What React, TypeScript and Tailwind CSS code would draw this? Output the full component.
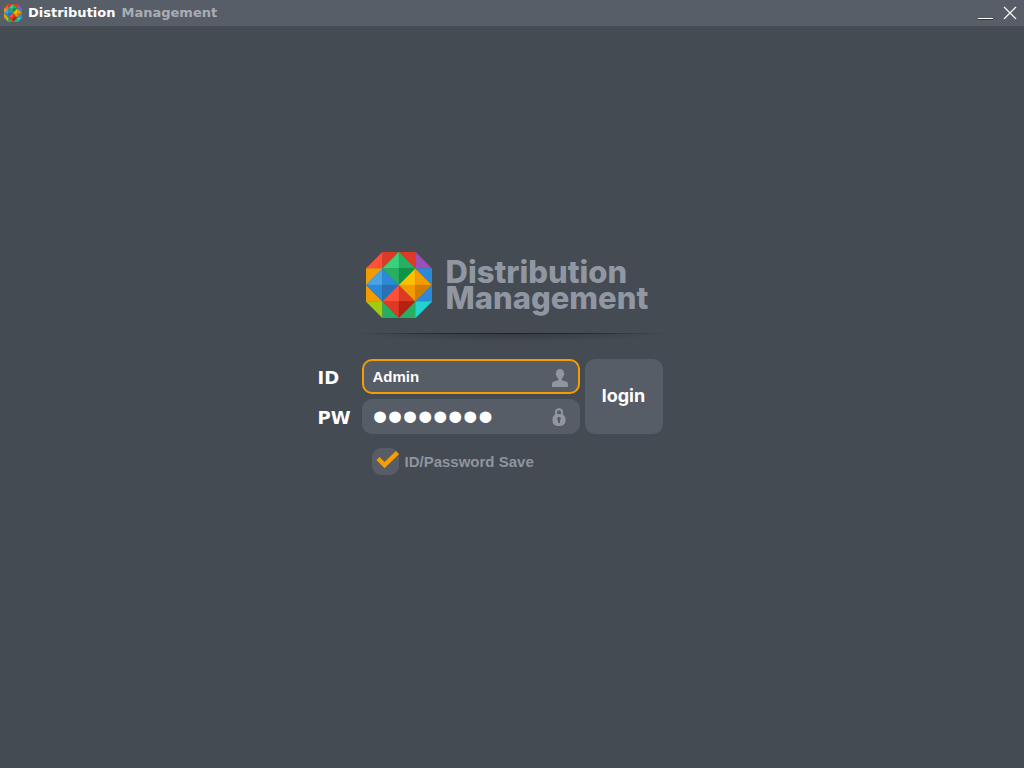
import { useState } from "react"

// Facets of the octagon on a 4x4 grid
const facets = [
  { points: "1,0 1,1 0,1", fill: "#ff5038" },
  { points: "1,0 2,0 1,1", fill: "#dc3a24" },
  { points: "2,0 3,0 3,1", fill: "#dc3a24" },
  { points: "2,0 2,1 1,1", fill: "#39d27c" },
  { points: "2,0 3,1 2,1", fill: "#27ae60" },
  { points: "3,0 4,1 3,1", fill: "#9b50b8" },
  { points: "0,1 1,1 0,2", fill: "#f39c00" },
  { points: "1,1 1,2 0,2", fill: "#4aa3e2" },
  { points: "1,1 2,2 1,2", fill: "#2b8ad8" },
  { points: "1,1 2,1 2,2", fill: "#27ae60" },
  { points: "2,1 3,1 2,2", fill: "#0d9444" },
  { points: "3,1 3,2 2,2", fill: "#fbc000" },
  { points: "3,1 4,2 3,2", fill: "#f39c00" },
  { points: "3,1 4,1 4,2", fill: "#2b8ad8" },
  { points: "0,2 1,3 0,3", fill: "#f39c00" },
  { points: "0,2 1,2 1,3", fill: "#2b8ad8" },
  { points: "1,2 2,2 1,3", fill: "#2c6fb2" },
  { points: "2,2 2,3 1,3", fill: "#ff5038" },
  { points: "2,2 3,3 2,3", fill: "#dc3a24" },
  { points: "2,2 3,2 3,3", fill: "#f39c00" },
  { points: "3,2 4,2 3,3", fill: "#d27c00" },
  { points: "4,2 4,3 3,3", fill: "#2b8ad8" },
  { points: "0,3 1,3 1,4", fill: "#a2cc10" },
  { points: "1,3 2,4 1,4", fill: "#27ae60" },
  { points: "1,3 2,3 2,4", fill: "#dc3a24" },
  { points: "2,3 3,3 2,4", fill: "#b6200f" },
  { points: "3,3 3,4 2,4", fill: "#27ae60" },
  { points: "3,3 4,3 3,4", fill: "#22d3d0" },
]

function Logo({ className }: { className?: string }) {
  return (
    <svg viewBox="0 0 4 4" className={className} aria-hidden="true">
      {facets.map((f) => (
        <polygon key={f.points} points={f.points} fill={f.fill} stroke={f.fill} strokeWidth="0.02" />
      ))}
    </svg>
  )
}

function UserIcon() {
  return (
    <svg viewBox="0 0 16 18" className="pointer-events-none absolute right-3 top-[10px] h-[18px] w-4 fill-[#90959e]" aria-hidden="true">
      <path d="M8 0C5.4 0 4 1.6 4.1 4.3 3.3 4.4 3.6 6.6 4.5 6.7 4.8 8 5.5 8.9 6.2 9.6V11.1C5.7 12 1.6 12.1.7 13.3.1 14.3 0 15.8 0 17.2 0 17.7.3 18 .8 18H15.2C15.7 18 16 17.7 16 17.2 16 15.8 15.9 14.3 15.3 13.3 14.4 12.1 10.3 12 9.8 11.1V9.6C10.5 8.9 11.2 8 11.5 6.7 12.4 6.6 12.7 4.4 11.9 4.3 12 1.6 10.6 0 8 0Z" />
    </svg>
  )
}

function LockIcon() {
  return (
    <svg viewBox="0 0 14 18" className="pointer-events-none absolute right-[14px] top-[9px] h-[18px] w-[14px]" aria-hidden="true">
      <path d="M4 8V4.2a3 3 0 0 1 6 0V8" fill="none" stroke="#90959e" strokeWidth="2" />
      <rect x="0.5" y="6" width="13" height="12" rx="5" fill="#90959e" />
      <path d="M7 9a1.8 1.8 0 0 0-1 3.3V15h2v-2.7A1.8 1.8 0 0 0 7 9Z" fill="#535a64" />
    </svg>
  )
}

export default function App() {
  const [id, setId] = useState("Admin")
  const [password, setPassword] = useState("password")
  const [save, setSave] = useState(true)

  return (
    <div className="flex min-h-screen flex-col bg-[#444b53] font-[Inter,sans-serif]">
      {/* Title bar */}
      <header className="flex h-[26px] items-center justify-between bg-[#575e67] pl-1 pr-[7px]">
        <div className="flex items-center gap-1.5 font-['DejaVu_Sans',sans-serif] text-[13px] font-bold">
          <Logo className="h-[18px] w-[18px]" />
          <p className="flex gap-1.5 text-[#a9adb3]">
            <span className="text-white">Distribution</span> Management
          </p>
        </div>
        <div className="flex items-center gap-2.5">
          <button type="button" aria-label="Minimize">
            <svg viewBox="0 0 15 14" className="h-3.5 w-[15px]">
              <path d="M0 13.5H15" stroke="#2f343a" />
              <path d="M0 12.5H15" stroke="#fff" />
            </svg>
          </button>
          <button type="button" aria-label="Close">
            <svg viewBox="0 0 14 14" className="h-3.5 w-3.5" fill="none">
              <path d="M1 2 13 14M13 2 1 14" stroke="#3a4047" />
              <path d="M1 1 13 13M13 1 1 13" stroke="#fff" strokeWidth="1.3" />
            </svg>
          </button>
        </div>
      </header>

      <main className="flex flex-1 flex-col items-center justify-center pb-[67px]">
        <div className="flex w-[301px] items-center gap-3.5 px-1 pb-[15px]">
          <Logo className="h-[66px] w-[66px] shrink-0" />
          <h1 className="text-[31px] font-extrabold leading-[26px] text-[#9097a2]">
            Distribution
            <br />
            Management
          </h1>
        </div>
        <div className="h-px w-[310px] bg-[linear-gradient(to_right,transparent,#272b31_25%,#1e2227_50%,#272b31_75%,transparent)]" />
        <div className="h-2 w-[310px] bg-[radial-gradient(ellipse_at_top,#373c43,transparent_70%)]" />

        <form className="pr-11 pt-[17px]" onSubmit={(e) => e.preventDefault()}>
          <div className="flex gap-[5px]">
            <div className="flex flex-col gap-[5px]">
              <div className="flex items-center">
                <label htmlFor="user-id" className="w-11 pt-0.5 font-['DejaVu_Sans',sans-serif] text-lg font-bold text-white">ID</label>
                <div className="relative">
                  <input
                    id="user-id"
                    type="text"
                    value={id}
                    onChange={(e) => setId(e.target.value)}
                    className="block h-[35px] w-[218px] rounded-[10px] border-2 border-[#f89c00] bg-[#565d67] pl-[9px] pr-9 font-['Liberation_Sans',sans-serif] text-[15px] font-bold text-white outline-none"
                  />
                  <UserIcon />
                </div>
              </div>
              <div className="flex items-center">
                <label htmlFor="user-pw" className="w-11 pt-0.5 font-['DejaVu_Sans',sans-serif] text-lg font-bold text-white">PW</label>
                <div className="relative">
                  <input
                    id="user-pw"
                    type="password"
                    value={password}
                    onChange={(e) => setPassword(e.target.value)}
                    className="block h-[35px] w-[218px] rounded-[10px] bg-[#565d67] pl-[11px] pr-9 font-['Liberation_Sans',sans-serif] text-[43px] leading-[35px] text-white outline-none"
                  />
                  <LockIcon />
                </div>
              </div>
            </div>
            <button type="submit" className="w-[78px] rounded-[10px] bg-[#565d67] pb-0.5 text-lg font-bold text-white">
              login
            </button>
          </div>

          <div className="flex items-center gap-1.5 pl-[54px] pt-3.5">
            <div className="relative h-[27px] w-[27px]">
              <input
                id="save"
                type="checkbox"
                checked={save}
                onChange={(e) => setSave(e.target.checked)}
                className="block h-[27px] w-[27px] appearance-none rounded-[9px] bg-[#565d67]"
              />
              {save && (
                <svg viewBox="0 0 27 27" className="pointer-events-none absolute inset-0" fill="none" aria-hidden="true">
                  <path d="M6 10.5 12.5 17 25.5 4.5" stroke="#f89c00" strokeWidth="4.5" />
                </svg>
              )}
            </div>
            <label htmlFor="save" className="pt-0.5 font-['Liberation_Sans',sans-serif] text-[15px] font-bold text-[#8f959e]">
              ID/Password Save
            </label>
          </div>
        </form>
      </main>
    </div>
  )
}
